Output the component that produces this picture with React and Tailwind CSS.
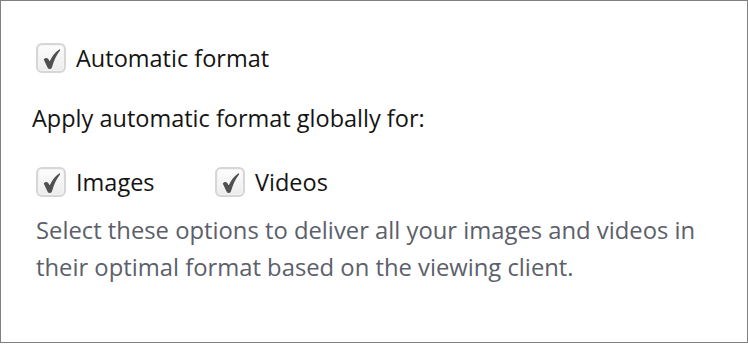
const FONT = { fontFamily: '"Open Sans", "Noto Sans", sans-serif' };

function Check() {
  return (
    <span className="flex h-[30px] w-[30px] shrink-0 items-center justify-center rounded-[6px] border-2 border-[#d6d6d6] bg-gradient-to-b from-[#fdfdfd] to-[#ececec] shadow-[inset_0_0_0_1px_#f4f4f4]">
      <svg width="30" height="30" viewBox="0 0 30 30" className="-m-[2px]">
        <path
          d="M8.4 16.6 C9.6 15.2 11.2 15.2 12.1 16.8 L13.7 19.8 C16.2 14 19.2 9.8 23.6 7 C20 11.4 17.4 16.8 15.4 24 C14.9 25.8 13 26 12.2 24.4 Z"
          fill="#505050"
          stroke="#505050"
          strokeWidth="1.2"
          strokeLinejoin="round"
        />
      </svg>
    </span>
  );
}

function Option({ label, className = '' }) {
  return (
    <label className={`flex items-center gap-[10px] ${className}`}>
      <Check />
      <span className="text-[23.5px] leading-[30px] text-[#141414]">{label}</span>
    </label>
  );
}

export default function App() {
  return (
    <div className="h-[344px] w-[748px] bg-white" style={FONT}>
      <div className="flex h-[343px] flex-col border border-[#808080] pl-[35px] pt-[42px]">
        <Option label="Automatic format" />

        <p className="-ml-[4px] mt-[30px] text-[23.5px] leading-[30px] text-[#141414]">
          Apply automatic format globally for:
        </p>

        <div className="mt-[34px] flex items-center">
          <Option label="Images" className="w-[179px]" />
          <Option label="Videos" className="gap-[8px]" />
        </div>

        <p className="mt-[15px] w-[690px] text-[23.8px] leading-[37px] text-[#5b606b]">
          Select these options to deliver all your images and videos in their optimal format based on the viewing client.
        </p>
      </div>
    </div>
  );
}
